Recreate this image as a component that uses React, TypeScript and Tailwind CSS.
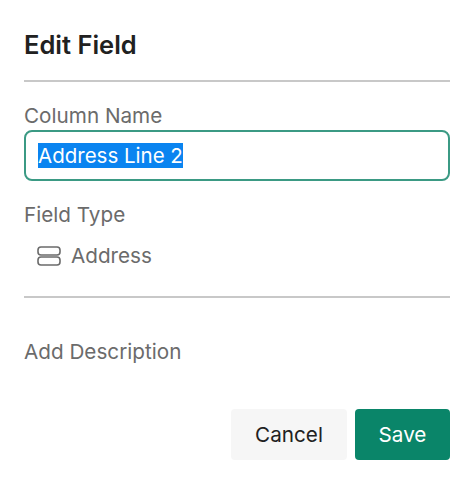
import React from "react";

function AddressIcon() {
    return <svg width="24" height="20" viewBox="0 0 24 20" fill="none" stroke="#6b6b6b" strokeWidth="1.6">
        <rect x="1" y="1" width="22" height="8" rx="3"/>
        <rect x="1" y="11" width="22" height="8" rx="3"/>
    </svg>;
}

export default function App() {
    return <div className="w-[474px] h-[484px] bg-white px-6 pt-[29px] font-['Inter',sans-serif] overflow-hidden">
        <h1 className="text-[25.5px] leading-[32px] font-semibold text-[#212121]">Edit Field</h1>
        <div className="mt-[19px] h-[2px] bg-[#c8c8c8]"/>

        <div className="mt-[21px] text-[20.7px] leading-[26px] text-[#6b6b6b]">Column Name</div>
        <div className="mt-[1px] h-[51px] flex items-center rounded-[8px] border-2 border-[#3b9a84] pl-[12px]">
            <span className="bg-[#0a84f0] text-white text-[20.5px] leading-[25px]">Address Line 2</span>
        </div>

        <div className="mt-[21px] text-[20.7px] leading-[26px] text-[#6b6b6b]">Field Type</div>
        <div className="mt-[15px] flex items-center gap-[10px] pl-[13px] text-[20.7px] leading-[26px] text-[#6b6b6b]">
            <AddressIcon/>
            <span>Address</span>
        </div>
        <div className="mt-[27px] h-[2px] bg-[#c8c8c8]"/>

        <div className="mt-[41px] text-[20.7px] leading-[26px] text-[#6b6b6b]">Add Description</div>

        <div className="mt-[44px] flex justify-end gap-[8px]">
            <button className="w-[116px] h-[51px] rounded-[4px] bg-[#f6f6f6] text-[20.7px] text-[#212121]">Cancel</button>
            <button className="w-[95px] h-[51px] rounded-[4px] bg-[#0a8569] text-[20.7px] text-white">Save</button>
        </div>
    </div>;
}
